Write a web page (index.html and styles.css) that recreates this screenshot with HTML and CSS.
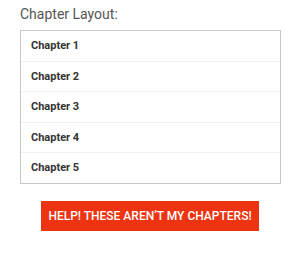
FILE: index.html
```html
<!DOCTYPE html>
<html lang="en">
<head>
    <meta charset="UTF-8">
    <title>Chapter Layout</title>
    <link rel="stylesheet" href="styles.css">
</head>
<body>
    <div class="panel">
        <div class="label">Chapter Layout:</div>
        <div class="chapters">
            <div class="chapter">Chapter 1</div>
            <div class="chapter">Chapter 2</div>
            <div class="chapter">Chapter 3</div>
            <div class="chapter">Chapter 4</div>
            <div class="chapter">Chapter 5</div>
        </div>
        <div class="actions">
            <button class="help">HELP! THESE AREN’T MY CHAPTERS!</button>
        </div>
    </div>
</body>
</html>
```

FILE: styles.css
```css
body {
    margin: 0;
    background-color: #fff;
    font-family: Roboto, 'Liberation Sans', sans-serif;
}
.panel {
    padding: 6px 19px 0 20px;
}
.label {
    font-size: 14px;
    color: #555;
    line-height: 17px;
    margin-bottom: 7px;
}
.chapters {
    border: 1px solid #c8c8c8;
}
.chapter {
    height: 29.5px;
    line-height: 29.5px;
    padding-left: 10px;
    font-size: 11px;
    font-weight: bold;
    color: #333;
    border-bottom: 1px solid #f0f0f0;
}
.chapter:last-child {
    border-bottom: none;
}
.actions {
    display: flex;
    justify-content: center;
    margin-top: 17px;
    margin-left: -1px;
}
.help {
    background-color: #ee3311;
    color: #fff;
    border: none;
    width: 218px;
    height: 30px;
    font-family: Roboto, 'Liberation Sans', sans-serif;
    font-size: 12px;
    font-weight: 500;
    white-space: nowrap;
    padding: 0;
}
```
